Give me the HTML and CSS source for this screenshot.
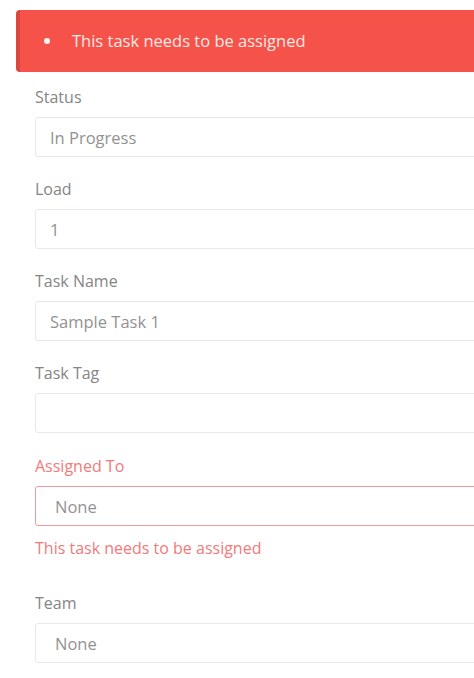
FILE: index.html
```html
<!DOCTYPE html>
<html lang="en">
<head>
<meta charset="utf-8">
<title>Task</title>
<link rel="stylesheet" href="styles.css">
</head>
<body>
<div class="page">
  <div class="alert">
    <ul class="alert-list">
      <li>This task needs to be assigned</li>
    </ul>
  </div>
  <form class="form">
    <div class="group">
      <label class="label">Status</label>
      <div class="control">In Progress</div>
    </div>
    <div class="group">
      <label class="label">Load</label>
      <div class="control">1</div>
    </div>
    <div class="group">
      <label class="label">Task Name</label>
      <div class="control">Sample Task 1</div>
    </div>
    <div class="group">
      <label class="label">Task Tag</label>
      <div class="control"></div>
    </div>
    <div class="group has-error">
      <label class="label">Assigned To</label>
      <div class="control select">None</div>
      <div class="help">This task needs to be assigned</div>
    </div>
    <div class="group">
      <label class="label">Team</label>
      <div class="control select">None</div>
    </div>
  </form>
</div>
</body>
</html>
```
FILE: styles.css
```css
html, body {
  margin: 0;
  padding: 0;
  background: #ffffff;
  overflow: hidden;
}
body {
  font-family: "Open Sans", "Noto Sans", sans-serif;
  font-size: 16px;
  color: #808080;
}
.page {
  width: 540px;
  padding-top: 10px;
}
.alert {
  margin-left: 16px;
  height: 62px;
  box-sizing: border-box;
  background: #f5534a;
  border-left: 4px solid #dc463d;
  border-radius: 4px;
  display: flex;
  align-items: center;
  color: #fde8e6;
}
.alert-list {
  list-style: none;
  margin: 0;
  padding: 0 0 0 24px;
  font-size: 16.5px;
  line-height: 24px;
}
.alert-list li {
  display: flex;
  align-items: center;
}
.alert-list li::before {
  content: "";
  width: 6px;
  height: 6px;
  border-radius: 50%;
  background: #fff6f5;
  margin-right: 22px;
  flex: none;
}
.form {
  margin: 0;
  padding: 13px 0 0 35px;
}
.group {
  margin-bottom: 20px;
}
.label {
  display: block;
  line-height: 24px;
  margin-bottom: 8px;
  color: #858585;
}
.control {
  box-sizing: border-box;
  height: 40px;
  border: 1px solid #e8e8e8;
  border-radius: 3px;
  padding: 0 14px;
  display: flex;
  align-items: center;
  font-size: 16.5px;
  color: #929292;
  background: #fff;
}
.control.select {
  padding-left: 19px;
}
.has-error {
  margin-top: 21px;
  margin-bottom: 31px;
}
.has-error .label {
  color: #f27a7a;
}
.has-error .control {
  border-color: #f29a9a;
}
.help {
  margin-top: 10px;
  line-height: 24px;
  color: #f27a7a;
}
```
